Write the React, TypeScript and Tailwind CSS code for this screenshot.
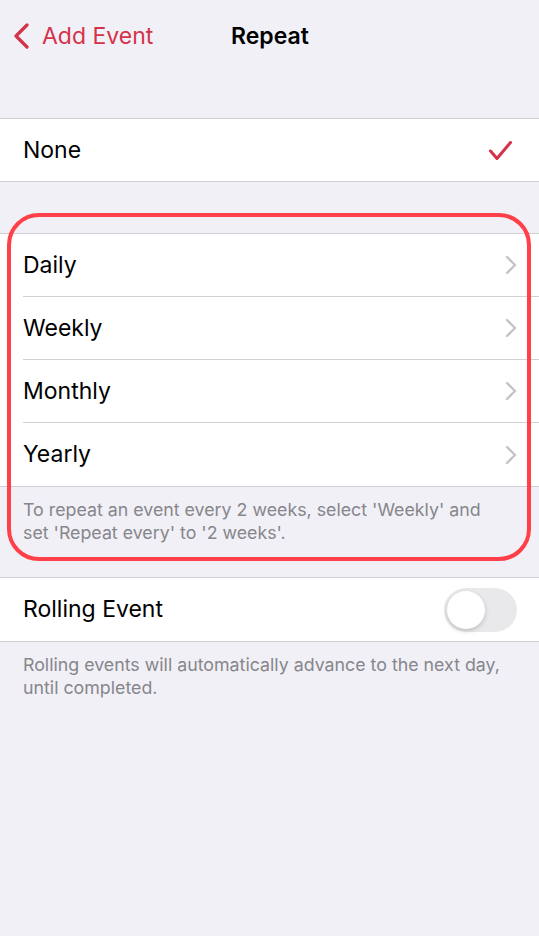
import { ReactNode } from "react";

const font = { fontFamily: "Inter, 'Noto Sans', sans-serif" };

function Chevron() {
  return (
    <svg width="12" height="20" viewBox="0 0 12 20" fill="none">
      <path d="M2 2l8 8-8 8" stroke="#c4c4c7" strokeWidth="2.4" strokeLinecap="round" strokeLinejoin="round" />
    </svg>
  );
}

function Row({ label, children, last, h = "h-[63px]" }: { label: string; children?: ReactNode; last?: boolean; h?: string }) {
  return (
    <div className={`flex items-center pl-[23px] ${h}`}>
      <div className={`flex h-full flex-1 items-center pr-[22px] ${last ? "" : "border-b border-[#d1d1d6]"}`}>
        <span className="flex-1 text-[23px] text-black">{label}</span>
        {children}
      </div>
    </div>
  );
}

function Toggle() {
  return (
    <div className="flex h-[44px] w-[73px] items-center rounded-full bg-[#e9e9eb] p-[3px]">
      <div className="h-[38px] w-[38px] rounded-full bg-white shadow-[0_2px_5px_rgba(0,0,0,0.18)]" />
    </div>
  );
}

export default function App() {
  const options = ["Daily", "Weekly", "Monthly", "Yearly"];

  return (
    <div className="min-h-[936px] w-full bg-[#f1f0f6]" style={font}>
      {/* nav bar */}
      <div className="relative flex h-[72px] items-center">
        <div className="flex items-center pl-[12px] text-[#d4334a]">
          <svg width="20" height="26" viewBox="0 0 20 26" fill="none">
            <path d="M15 2L4 13l11 11" stroke="#d4334a" strokeWidth="3.2" strokeLinecap="round" strokeLinejoin="round" />
          </svg>
          <span className="ml-[10px] text-[23px]">Add Event</span>
        </div>
        <span className="absolute left-[231px] text-[23px] font-semibold text-black">Repeat</span>
      </div>

      <div className="h-[46px]" />

      <div className="border-y border-[#cfcfd4] bg-white">
        <Row label="None" last h="h-[62px]">
          <svg width="25" height="21" viewBox="0 0 25 21" fill="none" className="mr-[4px]">
            <path d="M2.5 11l6.5 7.5L22.5 2.5" stroke="#d4334a" strokeWidth="3" strokeLinecap="round" strokeLinejoin="round" />
          </svg>
        </Row>
      </div>

      <div className="h-[51px]" />

      <div className="relative">
        <div className="border-y border-[#cfcfd4] bg-white">
          {options.map((o, i) => (
            <Row key={o} label={o} last={i === options.length - 1}>
              <Chevron />
            </Row>
          ))}
        </div>
        <p className="pl-[23px] pr-[30px] pt-[11px] text-[17.8px] leading-[23px] text-[#86868b]">
          To repeat an event every 2 weeks, select 'Weekly' and set 'Repeat every' to '2 weeks'.
        </p>
        {/* highlight around the repeat options */}
        <div className="pointer-events-none absolute left-[7px] top-[-20px] h-[348px] w-[524px] rounded-[32px] border-[4px] border-[#ff4048]" />
      </div>

      <div className="h-[33px]" />

      <div className="border-y border-[#cfcfd4] bg-white">
        <Row label="Rolling Event" last>
          <Toggle />
        </Row>
      </div>
      <p className="pl-[23px] pr-[20px] pt-[11px] text-[17.8px] leading-[23px] text-[#86868b]">
        Rolling events will automatically advance to the next day, until completed.
      </p>
    </div>
  );
}
